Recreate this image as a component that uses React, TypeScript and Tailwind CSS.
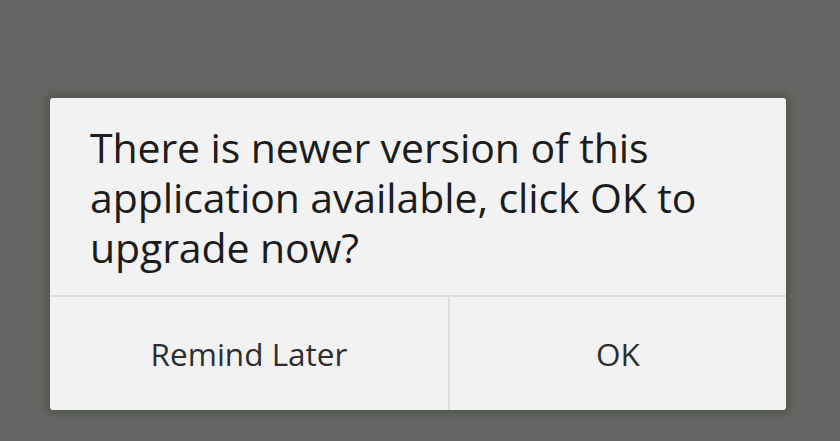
export default function App() {
  return (
    <div className="w-[840px] h-[441px] bg-[#646562] pt-[98px] pl-[50px] overflow-hidden" style={{ fontFamily: '"Open Sans", "Noto Sans", sans-serif' }}>
      <div className="w-[736px] h-[312px] bg-[#f2f2f2] rounded-[3px] flex flex-col shadow-[0_0_6px_4px_rgba(80,86,78,0.9)]">
        <div className="h-[197px] pl-[40px] pt-[24px] pr-[30px] text-[41px] leading-[50px] text-[#1c1c1c] tracking-[-0.1px]">
          There is newer version of this
          <br />
          application available, click OK to
          <br />
          upgrade now?
        </div>
        <div className="h-[2px] bg-[#dedede]" />
        <div className="flex flex-1">
          <div className="w-[400px] flex items-center justify-center text-[31.5px] text-[#2e2e2e] border-r-2 border-[#dedede]">
            Remind Later
          </div>
          <div className="flex-1 flex items-center justify-center text-[31.5px] text-[#2e2e2e]">
            OK
          </div>
        </div>
      </div>
    </div>
  );
}
